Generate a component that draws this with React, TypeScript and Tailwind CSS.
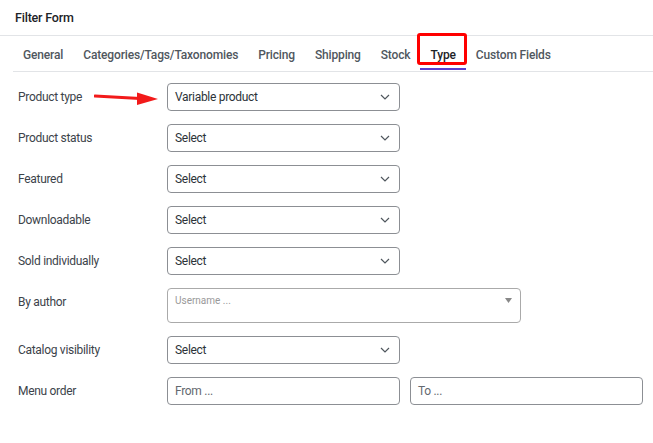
import React from "react";

const tabs = [
  "General",
  "Categories/Tags/Taxonomies",
  "Pricing",
  "Shipping",
  "Stock",
  "Type",
  "Custom Fields",
];

const Chevron = () => (
  <svg width="10" height="6" viewBox="0 0 10 6" className="shrink-0">
    <path d="M1 1l4 4 4-4" fill="none" stroke="#50575e" strokeWidth="1.2" />
  </svg>
);

function SelectBox({ value }: { value: string }) {
  return (
    <div className="flex h-[28px] w-[233px] items-center justify-between rounded-[4px] border border-[#8c8f94] bg-white pl-[7px] pr-[9px] text-[12px] tracking-[-0.3px] text-[#2c3338]">
      <span>{value}</span>
      <Chevron />
    </div>
  );
}

function Row({ label, children }: { label: string; children: React.ReactNode }) {
  return (
    <div className="flex items-start">
      <div className="w-[149px] shrink-0 text-[12px] leading-[28px] tracking-[-0.3px] text-[#3c434a]">
        {label}
      </div>
      {children}
    </div>
  );
}

export default function App() {
  return (
    <div className="h-[443px] w-[653px] bg-white font-['Roboto',sans-serif]">
      <div className="h-[36px] border-b border-[#e2e4e7] pl-[15px] pt-[9px] text-[12.5px] font-medium tracking-[-0.2px] text-[#1d2327]">
        Filter Form
      </div>

      <div className="ml-[13px] flex h-[36px] border-b border-[#e2e4e7]">
        {tabs.map((tab) => (
          <div
            key={tab}
            className={
              tab === "Type"
                ? "relative flex items-center px-[10px] pt-[2px] text-[12px] font-medium tracking-[-0.15px] text-[#1d2327]"
                : "flex items-center px-[10px] pt-[2px] text-[12px] font-medium tracking-[-0.15px] text-[#50575e]"
            }
          >
            {tab}
            {tab === "Type" && (
              <>
                <span className="absolute bottom-[1px] left-0 right-0 h-[2px] bg-[#5b3fd0]" />
                <span className="absolute left-[-3px] right-[-1px] top-[-3px] h-[32px] rounded-[3px] border-[3px] border-[#ff0000]" />
              </>
            )}
          </div>
        ))}
      </div>

      <div className="flex flex-col gap-[13px] pl-[18px] pt-[11px]">
        <Row label="Product type">
          <div className="relative">
            <SelectBox value="Variable product" />
            {/* red pointer arrow */}
            <svg
              width="70"
              height="16"
              viewBox="0 0 70 16"
              className="absolute left-[-73px] top-[8px]"
            >
              <path d="M1 5l45 2.5" stroke="#f21a1a" strokeWidth="3.2" strokeLinecap="round" />
              <path d="M43 1.5l21 6.5-21 6z" fill="#f21a1a" />
            </svg>
          </div>
        </Row>
        <Row label="Product status">
          <SelectBox value="Select" />
        </Row>
        <Row label="Featured">
          <SelectBox value="Select" />
        </Row>
        <Row label="Downloadable">
          <SelectBox value="Select" />
        </Row>
        <Row label="Sold individually">
          <SelectBox value="Select" />
        </Row>
        <Row label="By author">
          <div className="flex h-[35px] w-[354px] items-start justify-between rounded-[4px] border border-[#aaaaaa] bg-white pl-[7px] pr-[8px] pt-[4px]">
            <span className="text-[10px] text-[#999999]">Username ...</span>
            <svg width="7" height="5" viewBox="0 0 7 5" className="mt-[5px]">
              <path d="M0 0h7L3.5 5z" fill="#888888" />
            </svg>
          </div>
        </Row>
        <Row label="Catalog visibility">
          <SelectBox value="Select" />
        </Row>
        <Row label="Menu order">
          <div className="flex gap-[10px]">
            <div className="flex h-[28px] w-[233px] items-center rounded-[4px] border border-[#8c8f94] pl-[7px] text-[12px] tracking-[-0.3px] text-[#646970]">
              From ...
            </div>
            <div className="flex h-[28px] w-[233px] items-center rounded-[4px] border border-[#8c8f94] pl-[7px] text-[12px] tracking-[-0.3px] text-[#646970]">
              To ...
            </div>
          </div>
        </Row>
      </div>
    </div>
  );
}
